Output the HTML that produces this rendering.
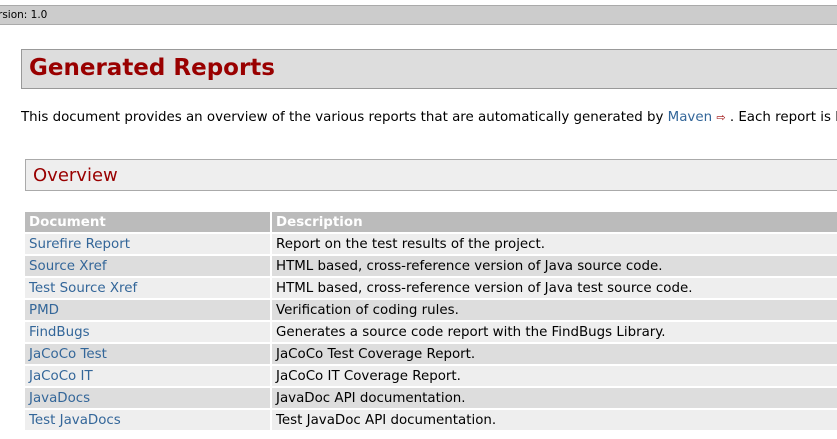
<html><head><style>
html,body{margin:0;width:837px;height:439px;overflow:hidden}
body{background:#fff;font-family:"DejaVu Sans",Verdana,sans-serif;font-size:13.4px;color:#000;position:relative}
.bar{position:absolute;left:0;top:5px;width:837px;height:18px;background:#ccc;border-top:1px solid #aaa;border-bottom:1px solid #aaa;font-size:10.5px;line-height:18px;text-indent:-2px;overflow:hidden}
.h{position:absolute;left:21px;top:49px;width:816px;height:38px;background:#ddd;border:1px solid #999;border-right:0}
.h span{position:absolute;left:7px;top:5px;font-size:23px;font-weight:bold;color:#900}
.p{position:absolute;left:21px;top:110px;width:816px;overflow:hidden;white-space:nowrap;font-size:13.4px}
a{color:#369;text-decoration:none}
.o{position:absolute;left:25px;top:159px;width:812px;height:30px;background:#eee;border:1px solid #aaa;border-right:0}
.o span{position:absolute;left:7px;top:5px;font-size:18px;color:#900}
.t{position:absolute;left:23px;top:210px;width:814px;overflow:hidden}
table{border-collapse:separate;border-spacing:2px;font-size:13.4px;width:830px}
td,th{padding:0 4px;height:20px;text-align:left;white-space:nowrap}
th{background:#bbb;color:#fff;font-weight:bold}
tr.a td{background:#eee}tr.b td{background:#ddd}
td:first-child,th:first-child{width:237px}
</style></head><body>
<div class="bar">rsion: 1.0</div>
<div class="h"><span>Generated Reports</span></div>
<div class="p">This document provides an overview of the various reports that are automatically generated by <a>Maven</a> <span style="color:#900;font-size:11px">⇨</span> . Each report is briefly described below.</div>
<div class="o"><span>Overview</span></div>
<div class="t"><table>
<tr><th>Document</th><th>Description</th></tr>
<tr class="a"><td><a>Surefire Report</a></td><td>Report on the test results of the project.</td></tr>
<tr class="b"><td><a>Source Xref</a></td><td>HTML based, cross-reference version of Java source code.</td></tr>
<tr class="a"><td><a>Test Source Xref</a></td><td>HTML based, cross-reference version of Java test source code.</td></tr>
<tr class="b"><td><a>PMD</a></td><td>Verification of coding rules.</td></tr>
<tr class="a"><td><a>FindBugs</a></td><td>Generates a source code report with the FindBugs Library.</td></tr>
<tr class="b"><td><a>JaCoCo Test</a></td><td>JaCoCo Test Coverage Report.</td></tr>
<tr class="a"><td><a>JaCoCo IT</a></td><td>JaCoCo IT Coverage Report.</td></tr>
<tr class="b"><td><a>JavaDocs</a></td><td>JavaDoc API documentation.</td></tr>
<tr class="a"><td><a>Test JavaDocs</a></td><td>Test JavaDoc API documentation.</td></tr>
</table></div>
</body></html>
